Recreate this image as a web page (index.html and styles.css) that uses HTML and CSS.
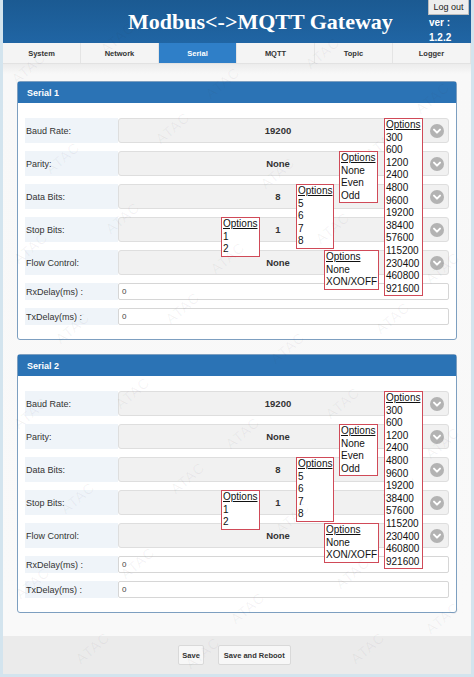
FILE: index.html
```html
<!DOCTYPE html>
<html>
<head>
<meta charset="utf-8">
<link rel="stylesheet" href="styles.css">
</head>
<body>
<div class="page">
  <header class="header">
    <h1 class="title">Modbus&lt;-&gt;MQTT Gateway</h1>
    <div class="side">
      <button class="logout">Log out</button>
      <div class="ver">ver :<br>1.2.2</div>
    </div>
  </header>
  <nav class="tabs">
    <div class="tab">System</div>
    <div class="tab">Network</div>
    <div class="tab active">Serial</div>
    <div class="tab">MQTT</div>
    <div class="tab">Topic</div>
    <div class="tab">Logger</div>
  </nav>
  <main class="main">
    <section class="panel">
      <div class="panel-head">Serial 1</div>
      <div class="panel-body">
        <div class="row">
          <div class="label">Baud Rate:</div>
          <div class="select"><span class="val">19200</span><span class="chev"><svg viewBox="0 0 14 14" width="14" height="14"><circle cx="7" cy="7" r="7" fill="#b3b3b3"/><path d="M4 5.6 L7 8.6 L10 5.6" fill="none" stroke="#fff" stroke-width="2" stroke-linecap="round" stroke-linejoin="round"/></svg></span></div>
          <div class="opts o-baud"><u>Options</u><br>300<br>600<br>1200<br>2400<br>4800<br>9600<br>19200<br>38400<br>57600<br>115200<br>230400<br>460800<br>921600</div>
        </div>
        <div class="row">
          <div class="label">Parity:</div>
          <div class="select"><span class="val">None</span><span class="chev"><svg viewBox="0 0 14 14" width="14" height="14"><circle cx="7" cy="7" r="7" fill="#b3b3b3"/><path d="M4 5.6 L7 8.6 L10 5.6" fill="none" stroke="#fff" stroke-width="2" stroke-linecap="round" stroke-linejoin="round"/></svg></span></div>
          <div class="opts o-parity"><u>Options</u><br>None<br>Even<br>Odd</div>
        </div>
        <div class="row">
          <div class="label">Data Bits:</div>
          <div class="select"><span class="val">8</span><span class="chev"><svg viewBox="0 0 14 14" width="14" height="14"><circle cx="7" cy="7" r="7" fill="#b3b3b3"/><path d="M4 5.6 L7 8.6 L10 5.6" fill="none" stroke="#fff" stroke-width="2" stroke-linecap="round" stroke-linejoin="round"/></svg></span></div>
          <div class="opts o-data"><u>Options</u><br>5<br>6<br>7<br>8</div>
        </div>
        <div class="row">
          <div class="label">Stop Bits:</div>
          <div class="select"><span class="val">1</span><span class="chev"><svg viewBox="0 0 14 14" width="14" height="14"><circle cx="7" cy="7" r="7" fill="#b3b3b3"/><path d="M4 5.6 L7 8.6 L10 5.6" fill="none" stroke="#fff" stroke-width="2" stroke-linecap="round" stroke-linejoin="round"/></svg></span></div>
          <div class="opts o-stop"><u>Options</u><br>1<br>2</div>
        </div>
        <div class="row">
          <div class="label">Flow Control:</div>
          <div class="select"><span class="val">None</span><span class="chev"><svg viewBox="0 0 14 14" width="14" height="14"><circle cx="7" cy="7" r="7" fill="#b3b3b3"/><path d="M4 5.6 L7 8.6 L10 5.6" fill="none" stroke="#fff" stroke-width="2" stroke-linecap="round" stroke-linejoin="round"/></svg></span></div>
          <div class="opts o-flow"><u>Options</u><br>None<br>XON/XOFF</div>
        </div>
        <div class="row irow">
          <div class="label">RxDelay(ms) :</div>
          <div class="input">0</div>
        </div>
        <div class="row irow">
          <div class="label">TxDelay(ms) :</div>
          <div class="input">0</div>
        </div>
      </div>
    </section>

    <section class="panel">
      <div class="panel-head">Serial 2</div>
      <div class="panel-body">
        <div class="row">
          <div class="label">Baud Rate:</div>
          <div class="select"><span class="val">19200</span><span class="chev"><svg viewBox="0 0 14 14" width="14" height="14"><circle cx="7" cy="7" r="7" fill="#b3b3b3"/><path d="M4 5.6 L7 8.6 L10 5.6" fill="none" stroke="#fff" stroke-width="2" stroke-linecap="round" stroke-linejoin="round"/></svg></span></div>
          <div class="opts o-baud"><u>Options</u><br>300<br>600<br>1200<br>2400<br>4800<br>9600<br>19200<br>38400<br>57600<br>115200<br>230400<br>460800<br>921600</div>
        </div>
        <div class="row">
          <div class="label">Parity:</div>
          <div class="select"><span class="val">None</span><span class="chev"><svg viewBox="0 0 14 14" width="14" height="14"><circle cx="7" cy="7" r="7" fill="#b3b3b3"/><path d="M4 5.6 L7 8.6 L10 5.6" fill="none" stroke="#fff" stroke-width="2" stroke-linecap="round" stroke-linejoin="round"/></svg></span></div>
          <div class="opts o-parity"><u>Options</u><br>None<br>Even<br>Odd</div>
        </div>
        <div class="row">
          <div class="label">Data Bits:</div>
          <div class="select"><span class="val">8</span><span class="chev"><svg viewBox="0 0 14 14" width="14" height="14"><circle cx="7" cy="7" r="7" fill="#b3b3b3"/><path d="M4 5.6 L7 8.6 L10 5.6" fill="none" stroke="#fff" stroke-width="2" stroke-linecap="round" stroke-linejoin="round"/></svg></span></div>
          <div class="opts o-data"><u>Options</u><br>5<br>6<br>7<br>8</div>
        </div>
        <div class="row">
          <div class="label">Stop Bits:</div>
          <div class="select"><span class="val">1</span><span class="chev"><svg viewBox="0 0 14 14" width="14" height="14"><circle cx="7" cy="7" r="7" fill="#b3b3b3"/><path d="M4 5.6 L7 8.6 L10 5.6" fill="none" stroke="#fff" stroke-width="2" stroke-linecap="round" stroke-linejoin="round"/></svg></span></div>
          <div class="opts o-stop"><u>Options</u><br>1<br>2</div>
        </div>
        <div class="row">
          <div class="label">Flow Control:</div>
          <div class="select"><span class="val">None</span><span class="chev"><svg viewBox="0 0 14 14" width="14" height="14"><circle cx="7" cy="7" r="7" fill="#b3b3b3"/><path d="M4 5.6 L7 8.6 L10 5.6" fill="none" stroke="#fff" stroke-width="2" stroke-linecap="round" stroke-linejoin="round"/></svg></span></div>
          <div class="opts o-flow"><u>Options</u><br>None<br>XON/XOFF</div>
        </div>
        <div class="row irow">
          <div class="label">RxDelay(ms) :</div>
          <div class="input">0</div>
        </div>
        <div class="row irow">
          <div class="label">TxDelay(ms) :</div>
          <div class="input">0</div>
        </div>
      </div>
    </section>
  </main>
  <footer class="footer">
    <button class="btn btn-save">Save</button>
    <button class="btn btn-reboot">Save and Reboot</button>
  </footer>
  <div class="watermarks" aria-hidden="true">
    <span style="left:6px;top:60px">ATAC</span>
    <span style="left:95px;top:30px">ATAC</span>
    <span style="left:200px;top:75px">ATAC</span>
    <span style="left:300px;top:45px">ATAC</span>
    <span style="left:410px;top:90px">ATAC</span>
    <span style="left:40px;top:150px">ATAC</span>
    <span style="left:150px;top:120px">ATAC</span>
    <span style="left:255px;top:165px">ATAC</span>
    <span style="left:360px;top:135px">ATAC</span>
    <span style="left:8px;top:240px">ATAC</span>
    <span style="left:100px;top:210px">ATAC</span>
    <span style="left:205px;top:250px">ATAC</span>
    <span style="left:310px;top:220px">ATAC</span>
    <span style="left:420px;top:260px">ATAC</span>
    <span style="left:50px;top:320px">ATAC</span>
    <span style="left:160px;top:300px">ATAC</span>
    <span style="left:265px;top:340px">ATAC</span>
    <span style="left:370px;top:310px">ATAC</span>
    <span style="left:8px;top:405px">ATAC</span>
    <span style="left:110px;top:385px">ATAC</span>
    <span style="left:220px;top:425px">ATAC</span>
    <span style="left:320px;top:395px">ATAC</span>
    <span style="left:420px;top:435px">ATAC</span>
    <span style="left:55px;top:490px">ATAC</span>
    <span style="left:165px;top:470px">ATAC</span>
    <span style="left:270px;top:510px">ATAC</span>
    <span style="left:375px;top:480px">ATAC</span>
    <span style="left:10px;top:575px">ATAC</span>
    <span style="left:115px;top:555px">ATAC</span>
    <span style="left:225px;top:600px">ATAC</span>
    <span style="left:330px;top:565px">ATAC</span>
    <span style="left:420px;top:610px">ATAC</span>
    <span style="left:70px;top:640px">ATAC</span>
    <span style="left:180px;top:645px">ATAC</span>
    <span style="left:345px;top:640px">ATAC</span>
  </div>
</div>
</body>
</html>
```

FILE: styles.css
```css
* { box-sizing: border-box; }
html, body { margin: 0; padding: 0; }
body {
  font-family: "Liberation Sans", Arial, sans-serif;
  color: #333;
  background: #fff;
}
.page {
  position: relative;
  width: 474px;
  height: 677px;
  border-left: 3px solid #d3e4ee;
  border-right: 3px solid #d3e4ee;
  border-bottom: 3px solid #d3e4ee;
  background: #f9f9f9;
  display: flex;
  flex-direction: column;
  overflow: hidden;
}
.header {
  height: 43px;
  background: linear-gradient(#1b5a92, #2065a4);
  display: flex;
  align-items: flex-start;
  margin: 0 -3px;
  padding-left: 128px;
}
.title {
  margin: 0;
  padding-top: 9px;
  font-family: "Liberation Serif", "Times New Roman", serif;
  font-weight: bold;
  font-size: 22px;
  color: #fff;
  flex: 1;
  white-space: nowrap;
}
.side {
  width: 44px;
  margin-right: 3px;
  display: flex;
  flex-direction: column;
  padding-left: 1px;
}
.logout {
  width: 41px;
  height: 15px;
  padding: 0;
  margin: 0;
  border: 1px solid #bcbcbc;
  border-top: 0;
  background: #eeeeee;
  font-family: "Liberation Sans", Arial, sans-serif;
  font-size: 9px;
  color: #222;
}
.ver {
  margin-top: 0;
  padding-left: 1px;
  font-size: 10px;
  font-weight: bold;
  color: #fff;
  line-height: 15px;
}
.tabs {
  height: 21px;
  display: grid;
  grid-template-columns: repeat(6, 1fr);
  background: #f4f4f4;
  border-bottom: 1px solid #e2e2e2;
}
.tab {
  display: flex;
  align-items: center;
  justify-content: center;
  font-size: 7.5px;
  font-weight: bold;
  color: #333;
  border-right: 1px solid #e4e4e4;
}
.tab.active {
  background: #2f7fc8;
  color: #fff;
}
.main {
  flex: 1;
  padding: 17px 14px 0 14px;
  background: linear-gradient(#ececec, #f8f8f8 10px, #f9f9f9);
  display: flex;
  flex-direction: column;
  gap: 14px;
}
.panel {
  background: #fff;
  border: 1px solid #7d9fc0;
  border-radius: 3px;
}
.panel-head {
  height: 21px;
  background: #2b73b5;
  color: #fff;
  font-size: 9px;
  font-weight: bold;
  display: flex;
  align-items: center;
  padding-left: 9px;
}
.panel-body {
  padding: 15px 7px 14px 7px;
  display: flex;
  flex-direction: column;
  gap: 8px;
}
.row {
  position: relative;
  display: flex;
  height: 25px;
}
.row.irow { height: 17px; }
.label {
  width: 93px;
  background: #eff4f9;
  font-size: 9px;
  color: #333;
  display: flex;
  align-items: center;
  padding-left: 1px;
}
.select {
  flex: 1;
  background: #f1f1f1;
  border: 1px solid #dedede;
  border-radius: 3px;
  display: flex;
  align-items: center;
  font-size: 9.5px;
  font-weight: bold;
  color: #333;
}
.val {
  flex: 1;
  text-align: center;
  padding-left: 7px;
}
.chev {
  width: 14px;
  height: 14px;
  margin-right: 4px;
  display: flex;
}
.input {
  flex: 1;
  background: #fff;
  border: 1px solid #d6d6d6;
  border-radius: 2px;
  font-size: 8px;
  color: #444;
  display: flex;
  align-items: center;
  padding-left: 3px;
}
.opts {
  position: absolute;
  top: 0;
  background: #fff;
  border: 1px solid #d04a58;
  font-size: 10px;
  line-height: 12.6px;
  color: #111;
  padding: 0 1px;
  z-index: 2;
}
.o-baud { left: 359px; width: 39px; }
.o-parity { left: 314px; width: 39px; }
.o-data { left: 271px; width: 38px; }
.o-stop { left: 196px; width: 39px; }
.o-flow { left: 299px; width: 55px; }
.footer {
  height: 38px;
  margin-top: 18px;
  background: #ebebeb;
  display: flex;
  justify-content: center;
  align-items: center;
  gap: 14px;
  padding-right: 5px;
}
.btn {
  height: 20px;
  background: #f7f7f7;
  border: 1px solid #d9d9d9;
  border-radius: 2px;
  font-family: "Liberation Sans", Arial, sans-serif;
  font-size: 7.5px;
  font-weight: bold;
  color: #333;
}
.btn-save { padding: 0 3px; }
.btn-reboot { padding: 0 5px; }
.watermarks {
  position: absolute;
  inset: 0;
  pointer-events: none;
  z-index: 5;
}
.watermarks span {
  position: absolute;
  font-size: 14px;
  color: rgba(60, 60, 60, 0.06);
  transform: rotate(-40deg);
  letter-spacing: 1px;
}
```
